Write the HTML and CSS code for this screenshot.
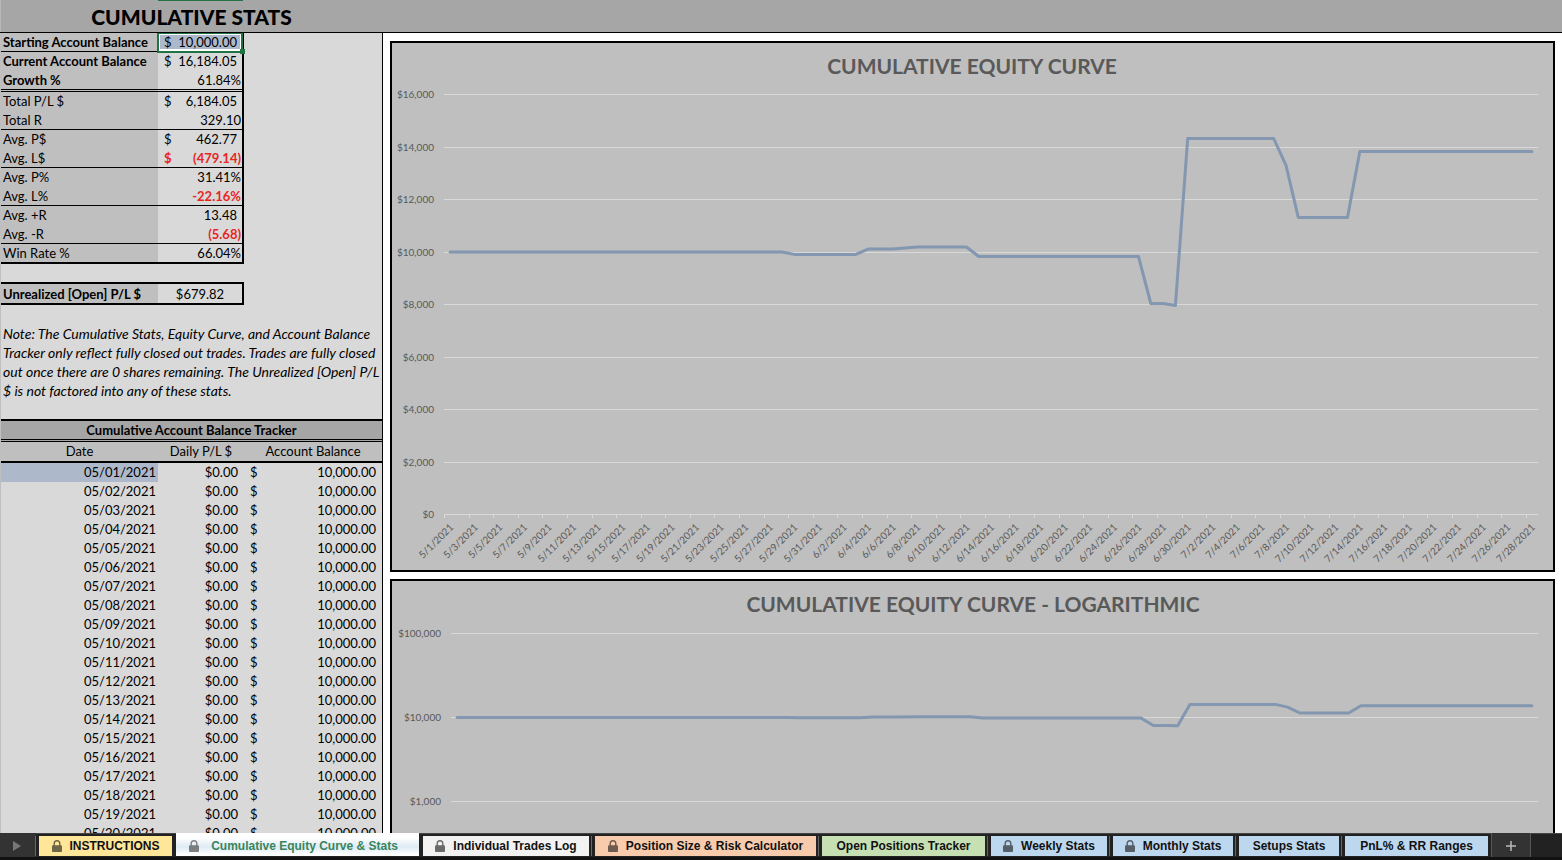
FILE: index.html
```html
<!DOCTYPE html>
<html lang="en">
<head>
<meta charset="utf-8">
<title>Cumulative Equity Curve &amp; Stats</title>
<link rel="stylesheet" href="styles.css">
</head>
<body>
<header class="title-row"><h1 class="title">CUMULATIVE STATS</h1></header>

<main class="sheet">
  <section class="side">
    <table class="stats">
      <tbody>
        <tr class="strong line"><th scope="row">Starting Account Balance</th><td class="selected"><div class="money acct"><span>$</span><span>10,000.00</span></div><i class="handle"></i></td></tr>
        <tr class="strong"><th scope="row">Current Account Balance</th><td><div class="money acct"><span>$</span><span>16,184.05</span></div></td></tr>
        <tr class="strong double"><th scope="row">Growth %</th><td>61.84%</td></tr>
        <tr><th scope="row">Total P/L $</th><td><div class="money acct"><span>$</span><span>6,184.05</span></div></td></tr>
        <tr class="line"><th scope="row">Total R</th><td>329.10</td></tr>
        <tr><th scope="row">Avg. P$</th><td><div class="money acct"><span>$</span><span>462.77</span></div></td></tr>
        <tr class="line"><th scope="row">Avg. L$</th><td class="loss"><div class="money"><span>$</span><span>(479.14)</span></div></td></tr>
        <tr><th scope="row">Avg. P%</th><td>31.41%</td></tr>
        <tr class="line"><th scope="row">Avg. L%</th><td class="loss">-22.16%</td></tr>
        <tr><th scope="row">Avg. +R</th><td class="inset">13.48</td></tr>
        <tr class="line"><th scope="row">Avg. -R</th><td class="loss">(5.68)</td></tr>
        <tr class="end"><th scope="row">Win Rate %</th><td>66.04%</td></tr>
      </tbody>
    </table>

    <table class="stats open-pl">
      <tbody><tr class="strong"><th scope="row">Unrealized [Open] P/L $</th><td>$679.82</td></tr></tbody>
    </table>

    <p class="note">Note: The Cumulative Stats, Equity Curve, and Account Balance<br>Tracker only reflect fully closed out trades. Trades are fully closed<br>out once there are 0 shares remaining. The Unrealized [Open] P/L<br>$ is not factored into any of these stats.</p>

    <table class="tracker">
      <caption>Cumulative Account Balance Tracker</caption>
      <colgroup><col class="c-date"><col class="c-pl"><col class="c-balance"></colgroup>
      <thead><tr><th scope="col">Date</th><th scope="col">Daily P/L $</th><th scope="col">Account Balance</th></tr></thead>
      <tbody id="tracker-rows"></tbody>
    </table>
  </section>

  <section class="charts">
    <figure class="chart"><svg id="linear" viewBox="0 0 1161 527" role="img" aria-label="Cumulative equity curve"></svg></figure>
    <figure class="chart"><svg id="log" viewBox="0 0 1161 527" role="img" aria-label="Cumulative equity curve, logarithmic"></svg></figure>
  </section>
</main>

<svg class="defs" aria-hidden="true"><symbol id="lock" viewBox="0 0 10 12"><path d="M2.2 6V3.6a2.8 2.8 0 0 1 5.6 0V6" fill="none" stroke="currentColor" stroke-width="1.4"/><rect x="0" y="5.2" width="10" height="6.8" rx="1" fill="currentColor"/></symbol></svg>

<nav class="tabs" aria-label="Sheets">
  <button class="scroll" aria-label="Next sheet"><svg class="arrow" viewBox="0 0 8 10"><path d="M0 0L8 5L0 10Z" fill="currentColor"/></svg></button>
  <button class="tab yellow w-instructions"><svg class="lock"><use href="#lock"/></svg>INSTRUCTIONS</button>
  <button class="tab active w-curve" aria-current="page"><svg class="lock"><use href="#lock"/></svg>Cumulative Equity Curve &amp; Stats</button>
  <button class="tab white w-trades"><svg class="lock"><use href="#lock"/></svg>Individual Trades Log</button>
  <button class="tab orange w-risk"><svg class="lock"><use href="#lock"/></svg>Position Size &amp; Risk Calculator</button>
  <button class="tab green w-open">Open Positions Tracker</button>
  <button class="tab blue w-week"><svg class="lock"><use href="#lock"/></svg>Weekly Stats</button>
  <button class="tab blue w-month"><svg class="lock"><use href="#lock"/></svg>Monthly Stats</button>
  <button class="tab blue w-setups">Setups Stats</button>
  <button class="tab blue w-ranges">PnL% &amp; RR Ranges</button>
  <button class="add" aria-label="Add sheet"><svg class="plus" viewBox="0 0 10 10"><path d="M5 0V10M0 5H10" stroke="currentColor" stroke-width="1.5"/></svg></button>
</nav>
<script src="script.js"></script>
</body>
</html>
```
FILE: styles.css
```css
* { box-sizing: border-box; }

body {
  margin: 0;
  height: 100vh;
  display: flex;
  flex-direction: column;
  overflow: hidden;
  background: #fff;
  color: #000;
  font: 13px/18px Lato, Carlito, Calibri, sans-serif;
}

.title-row {
  flex: none;
  height: 33px;
  background: #a6a6a6;
  border-bottom: 1px solid #000;
  box-shadow: inset 1px 0 #b8b8b8;
}
.title {
  margin: 0;
  width: 383px;
  font-size: 21px;
  line-height: 34px;
  font-weight: 900;
  text-align: center;
  background: linear-gradient(#217346, #217346) 158px 0 / 85px 1px no-repeat;
}

.sheet { flex: 1; min-height: 0; display: flex; overflow: hidden; }

.side {
  flex: none;
  width: 383px;
  background: #d9d9d9;
  border-left: 1px solid #bfbfbf;
  border-right: 1px solid #000;
}

table { border-collapse: separate; border-spacing: 0; table-layout: fixed; }
th, td { padding: 0; height: 19px; white-space: nowrap; vertical-align: top; }

.stats { width: 243px; border-right: 2px solid #000; }
.stats th {
  width: 157px;
  padding-left: 2px;
  background: #bfbfbf;
  font-weight: 400;
  text-align: left;
}
.stats td { padding-right: 1px; text-align: right; }
.stats td.inset { padding-right: 5px; }
.stats .strong th { font-weight: 700; }
.line th, .line td { border-bottom: 1px solid #000; }
.double th, .double td { height: 21px; border-bottom: 3px double #000; }
.end th, .end td { height: 20px; border-bottom: 2px solid #000; }
.loss { color: #e8251f; font-weight: 700; }

.money { display: flex; justify-content: space-between; padding-left: 6px; }
.acct { padding-right: 4px; }

.stats .selected {
  position: relative;
  background: #adb9ca;
  border-bottom-color: #217346;
  outline: 2px solid #217346;
  outline-offset: -1px;
  box-shadow: inset 0 0 0 2px #fff;
}
.handle {
  position: absolute;
  right: -3px;
  bottom: -3px;
  width: 5px;
  height: 5px;
  background: #217346;
}

.open-pl {
  margin-top: 18px;
  border-top: 2px solid #000;
  border-bottom: 2px solid #000;
}
.open-pl th, .open-pl td { vertical-align: middle; }
.open-pl td { padding: 0; text-align: center; }

.note { margin: 19px 0; padding-left: 2px; font-size: 14px; line-height: 19px; font-style: italic; white-space: nowrap; }

.tracker { width: 100%; }
.tracker caption {
  height: 23px;
  background: #a6a6a6;
  border-top: 2px solid #000;
  border-bottom: 3px double #000;
  font-weight: 700;
}
.c-date { width: 157px; }
.c-pl { width: 86px; }
.tracker th { height: 21px; background: #bfbfbf; border-bottom: 2px solid #000; font-weight: 400; }
.tracker td { text-align: right; padding-right: 2px; }
.tracker td + td { padding-right: 6px; }
.tracker tr:first-child td:first-child { background: #adb9ca; }

.charts {
  flex: 1;
  min-width: 0;
  display: flex;
  flex-direction: column;
  gap: 7px;
  padding: 8px 7px;
}
.chart { flex: none; margin: 0; background: #bfbfbf; border: 2px solid #000; }
.chart svg { display: block; width: 100%; height: auto; }
.chart-title { font-size: 21px; font-weight: 700; fill: #595959; text-anchor: middle; }
.tick-label { font-size: 10px; fill: #595959; text-anchor: end; }
.grid { stroke: #d9d9d9; stroke-width: 1; }
.curve { fill: none; stroke: #8497b0; stroke-width: 3; stroke-linejoin: round; stroke-linecap: round; }

.defs { position: absolute; width: 0; height: 0; }

.tabs {
  flex: none;
  height: 27px;
  display: flex;
  background: #222;
  border-bottom: 3px solid #111;
  box-shadow: inset 0 1px #444;
}
.tabs button {
  flex: none;
  padding: 0;
  border: 0;
  font: bold 12px/18px "Liberation Sans", Arial, sans-serif;
  color: #111;
}
.tabs .scroll { width: 36px; background: #333; color: #777; padding-top: 2px; }
.arrow { display: block; width: 8px; height: 10px; margin-left: 13px; }
.tabs .tab {
  display: flex;
  align-items: center;
  justify-content: center;
  gap: 8px;
  margin: 3px 3px 1px;
  height: 20px;
  outline: 0;
  box-shadow: -3px 0 #222, -4px 0 #666;
}
.lock { width: 10px; height: 12px; opacity: .6; flex: none; }
.tabs .yellow { background: #ffe699; }
.tabs .white { background: #f2f2f2; box-shadow: none; }
.tabs .orange { background: #f8cbad; }
.tabs .green { background: #c6e0b4; }
.tabs .blue { background: #bdd7ee; }
.tabs .active {
  margin: 0 1px;
  height: 23px;
  padding-top: 2px;
  padding-right: 8px;
  gap: 12px;
  background: linear-gradient(#fff 20%, #deebf4 60%, #fff 95%);
  box-shadow: none;
  color: #38855c;
}
.active .lock { color: #333; }
.w-instructions { width: 133px; }
.w-curve { width: 243px; }
.w-trades { width: 166px; }
.w-risk { width: 221px; }
.w-open { width: 163px; }
.w-week { width: 116px; }
.w-month { width: 120px; }
.w-setups { width: 100px; }
.w-ranges { width: 143px; }
.tabs .add {
  width: 40px;
  background: #333;
  color: #bbb;
  border-left: 1px solid #555;
  border-right: 1px solid #555;
}
.plus { display: block; width: 10px; height: 10px; margin: 2px auto 0; }
```
FILE: script.js
```js
// Tracker rows: one per day, opening balance unchanged.
const rows = [];
for (let day = 1; day <= 20; day++) {
  const date = `05/${String(day).padStart(2, "0")}/2021`;
  rows.push(`<tr><td>${date}</td><td>$0.00</td><td><div class="money"><span>$</span><span>10,000.00</span></div></td></tr>`);
}
document.getElementById("tracker-rows").innerHTML = rows.join("");

// [day index, account balance], day 0 = 5/1/2021
const curve = [
  [0, 10000], [27, 10000], [28, 9910], [33, 9910], [34, 10110], [36, 10110],
  [38, 10190], [42, 10190], [43, 9829], [56, 9829], [57, 8038], [58, 8038],
  [59, 7962], [60, 14324], [67, 14324], [68, 13300], [69, 11314], [73, 11314],
  [74, 13829], [88, 13829]
];
const DAYS = 89;

function draw(id, o) {
  const step = (o.right - o.left) / DAYS;
  let s = `<text class="chart-title" x="${o.titleX}" y="31">${o.title}</text>`;
  for (const v of o.ticks) {
    const y = o.y(v);
    const gy = Math.round(y - 0.5) + 0.5;
    s += `<line class="grid" x1="${o.left}" x2="${o.right}" y1="${gy}" y2="${gy}"/>`;
    s += `<text class="tick-label" x="${o.left - 10}" y="${gy + 3}">$${v.toLocaleString("en-US")}</text>`;
  }
  if (o.dates) {
    for (let i = 0; i < DAYS; i += 2) {
      const x = o.left + i * step;
      const d = new Date(2021, 4, 1 + i);
      const tx = Math.round(x) + 0.5;
      s += `<line class="grid" x1="${tx}" x2="${tx}" y1="471" y2="475"/>`;
      s += `<text class="tick-label" transform="translate(${x + 10} 485) rotate(-45)">${d.getMonth() + 1}/${d.getDate()}/2021</text>`;
    }
  }
  const pts = curve.map(([i, v]) => `${(o.left + (i + 0.5) * step).toFixed(1)},${o.y(v).toFixed(1)}`);
  s += `<polyline class="curve" points="${pts.join(" ")}"/>`;
  document.getElementById(id).innerHTML = s;
}

draw("linear", {
  title: "CUMULATIVE EQUITY CURVE", titleX: 580, left: 52, right: 1146, dates: true,
  ticks: [0, 2000, 4000, 6000, 8000, 10000, 12000, 14000, 16000],
  y: v => 471.5 - v * 0.02625
});
draw("log", {
  title: "CUMULATIVE EQUITY CURVE - LOGARITHMIC", titleX: 581, left: 59, right: 1146, dates: false,
  ticks: [10, 100, 1000, 10000, 100000],
  y: v => 52.5 + (5 - Math.log10(v)) * 84
});
```
